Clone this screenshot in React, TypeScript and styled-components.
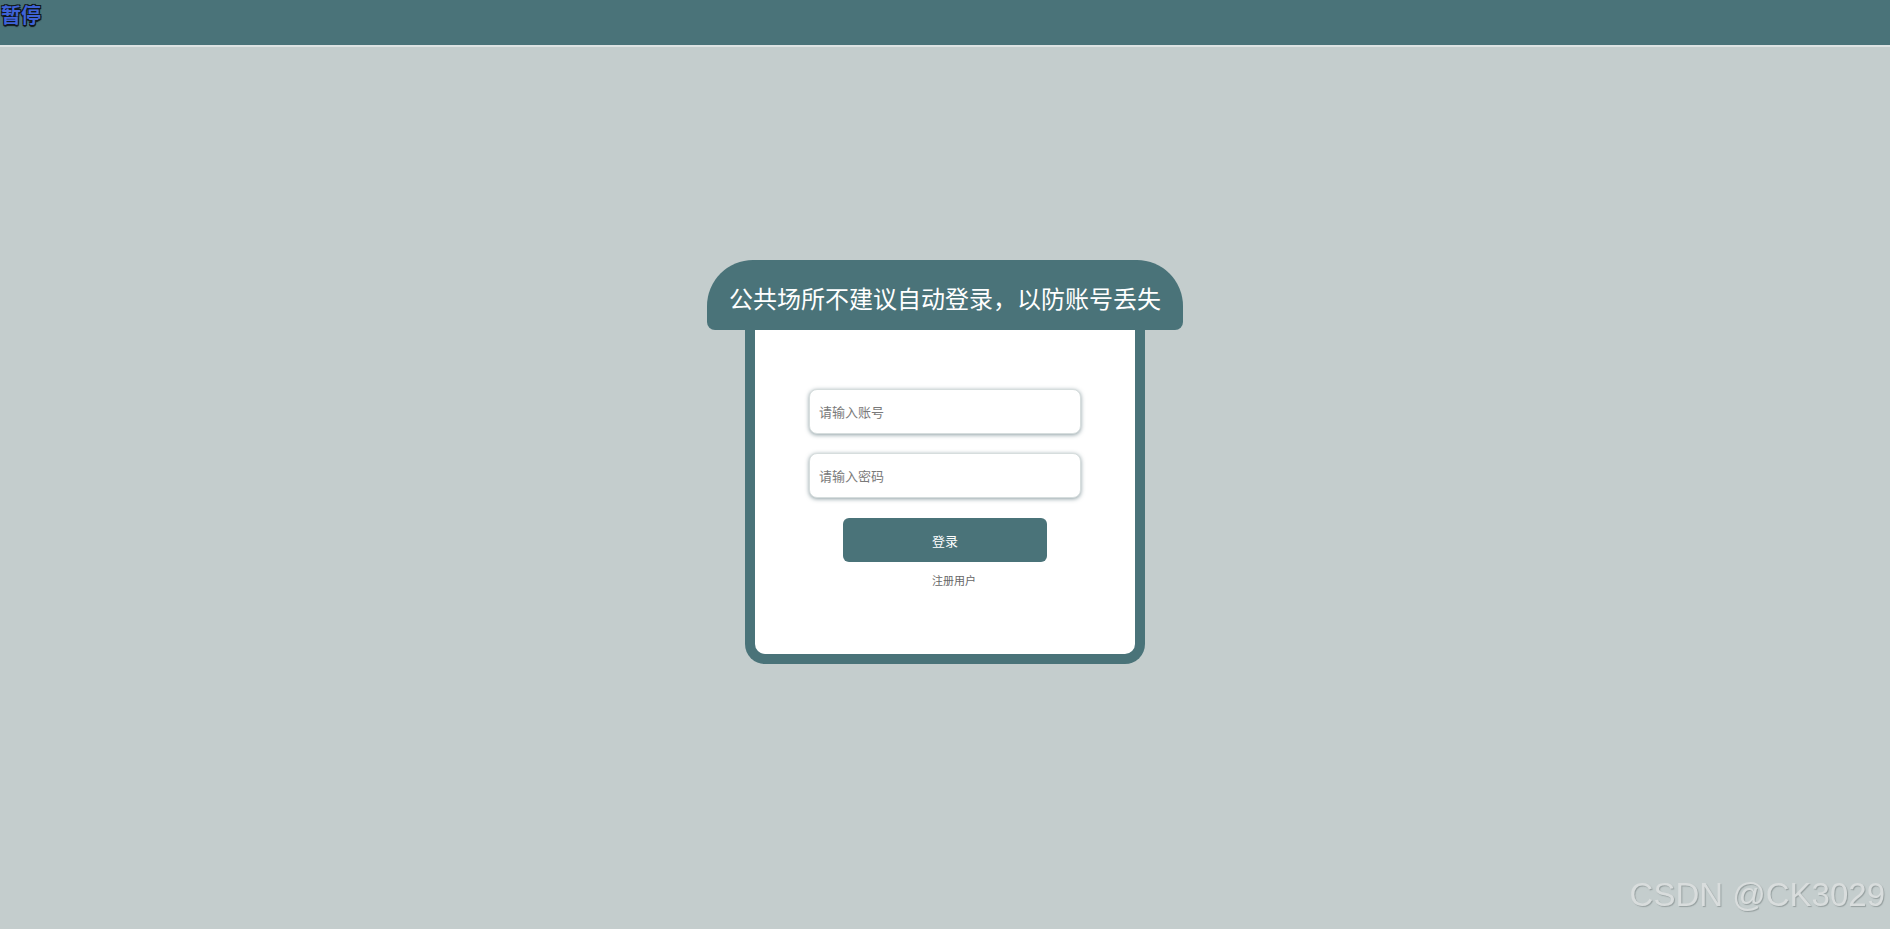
import React from "react";
import styled, { createGlobalStyle } from "styled-components";

const GlobalStyle = createGlobalStyle`
  html, body {
    margin: 0;
    padding: 0;
    background: #c4cdcd;
    font-family: "Noto Sans CJK SC", "Liberation Sans", sans-serif;
  }
`;

const Page = styled.div`
  min-height: 100vh;
  background: #c4cdcd;
`;

const Header = styled.div`
  height: 45px;
  background: #4a7379;
  border-bottom: 2px solid #dde3e3;
  overflow: hidden;
`;

const PauseText = styled.span`
  display: inline-block;
  margin-left: 1px;
  font-size: 20px;
  font-weight: 700;
  line-height: 30px;
  color: #3f63d8;
  text-shadow: 1px 1px 0 #10181c, -1px -1px 0 #10181c, 1px -1px 0 #10181c,
    -1px 1px 0 #10181c, 0 2px 1px #10181c;
`;

const Main = styled.div`
  display: flex;
  flex-direction: column;
  align-items: center;
  padding-top: 213px;
`;

const Tip = styled.div`
  width: 476px;
  height: 70px;
  box-sizing: border-box;
  padding-top: 4px;
  display: flex;
  align-items: center;
  justify-content: center;
  background: #4a7379;
  border-radius: 46px 46px 8px 8px;
  color: #ffffff;
  font-size: 24px;
`;

const Card = styled.div`
  width: 400px;
  height: 334px;
  box-sizing: border-box;
  border: 10px solid #4a7379;
  border-top: 0;
  border-radius: 0 0 20px 20px;
  background: #ffffff;
  display: flex;
  flex-direction: column;
  align-items: center;
  padding-top: 59px;
`;

const Input = styled.input<{ $gap: number }>`
  width: 272px;
  height: 45px;
  box-sizing: border-box;
  border: 1px solid #d6dddd;
  border-radius: 8px;
  padding: 0 9px;
  margin-bottom: ${(p) => p.$gap}px;
  font-family: "Noto Sans CJK SC", "Liberation Sans", sans-serif;
  font-size: 13px;
  color: #333;
  outline: none;
  box-shadow: 0 1px 4px rgba(50, 80, 90, 0.55);

  &::placeholder {
    color: #7a7a7a;
  }
`;

const LoginButton = styled.button`
  width: 204px;
  height: 44px;
  border: 0;
  border-radius: 6px;
  background: #4a7379;
  color: #ffffff;
  font-family: "Noto Sans CJK SC", "Liberation Sans", sans-serif;
  font-size: 13px;
  cursor: pointer;
`;

const RegisterLink = styled.a`
  margin-top: 10px;
  margin-left: 18px;
  font-size: 11px;
  line-height: 16px;
  color: #666666;
  text-decoration: none;
  cursor: pointer;
`;

const Watermark = styled.div`
  position: fixed;
  top: 878px;
  right: 5px;
  font-family: "Liberation Sans", Arial, sans-serif;
  font-size: 33px;
  line-height: 1;
  color: #d9dddd;
  text-shadow: 1px 1px 1px rgba(120, 130, 130, 0.6);
  pointer-events: none;
`;

export default function App() {
  return (
    <Page>
      <GlobalStyle />
      <Header>
        <PauseText>暂停</PauseText>
      </Header>
      <Main>
        <Tip>公共场所不建议自动登录，以防账号丢失</Tip>
        <Card>
          <Input $gap={19} type="text" placeholder="请输入账号" />
          <Input $gap={20} type="password" placeholder="请输入密码" />
          <LoginButton>登录</LoginButton>
          <RegisterLink>注册用户</RegisterLink>
        </Card>
      </Main>
      <Watermark>CSDN @CK3029</Watermark>
    </Page>
  );
}
